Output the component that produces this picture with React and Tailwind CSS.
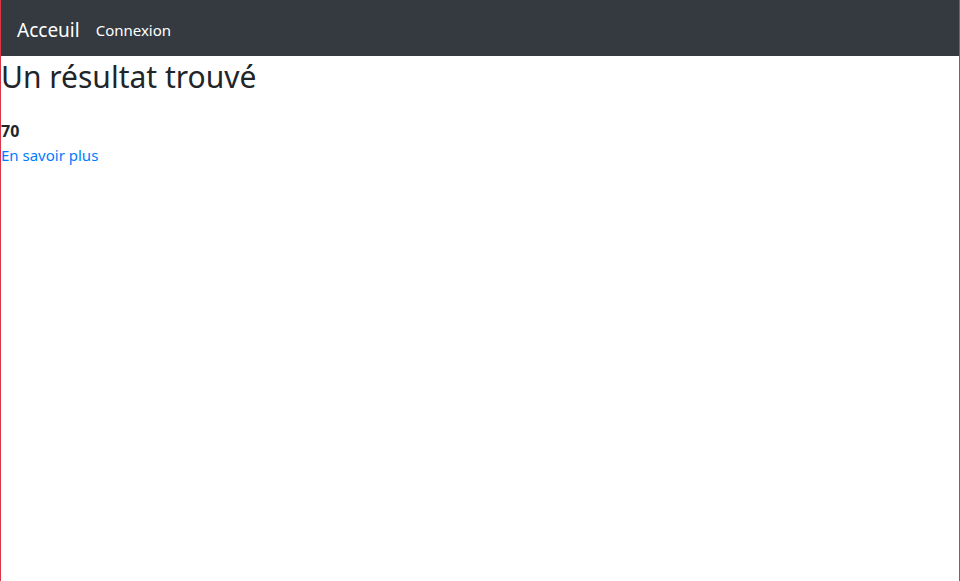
export default function App() {
  return (
    <div className="min-h-[581px] border-x border-[#dc3545] bg-white font-['Noto_Sans',sans-serif] text-[#212529]">
      <nav className="flex h-14 items-center bg-[#343a40] px-4 pt-[3px]">
        <a href="#" className="mr-4 text-[19px] leading-[30px] text-white">
          Acceuil
        </a>
        <a href="#" className="text-[15px] leading-6 text-white">
          Connexion
        </a>
      </nav>
      <h2 className="mt-0.5 text-[30px] leading-[38px] font-normal">Un résultat trouvé</h2>
      <div className="mt-[23px] text-base leading-6 font-bold">70</div>
      <a href="#" className="block text-[15px] leading-6 text-[#007bff]">
        En savoir plus
      </a>
    </div>
  );
}
